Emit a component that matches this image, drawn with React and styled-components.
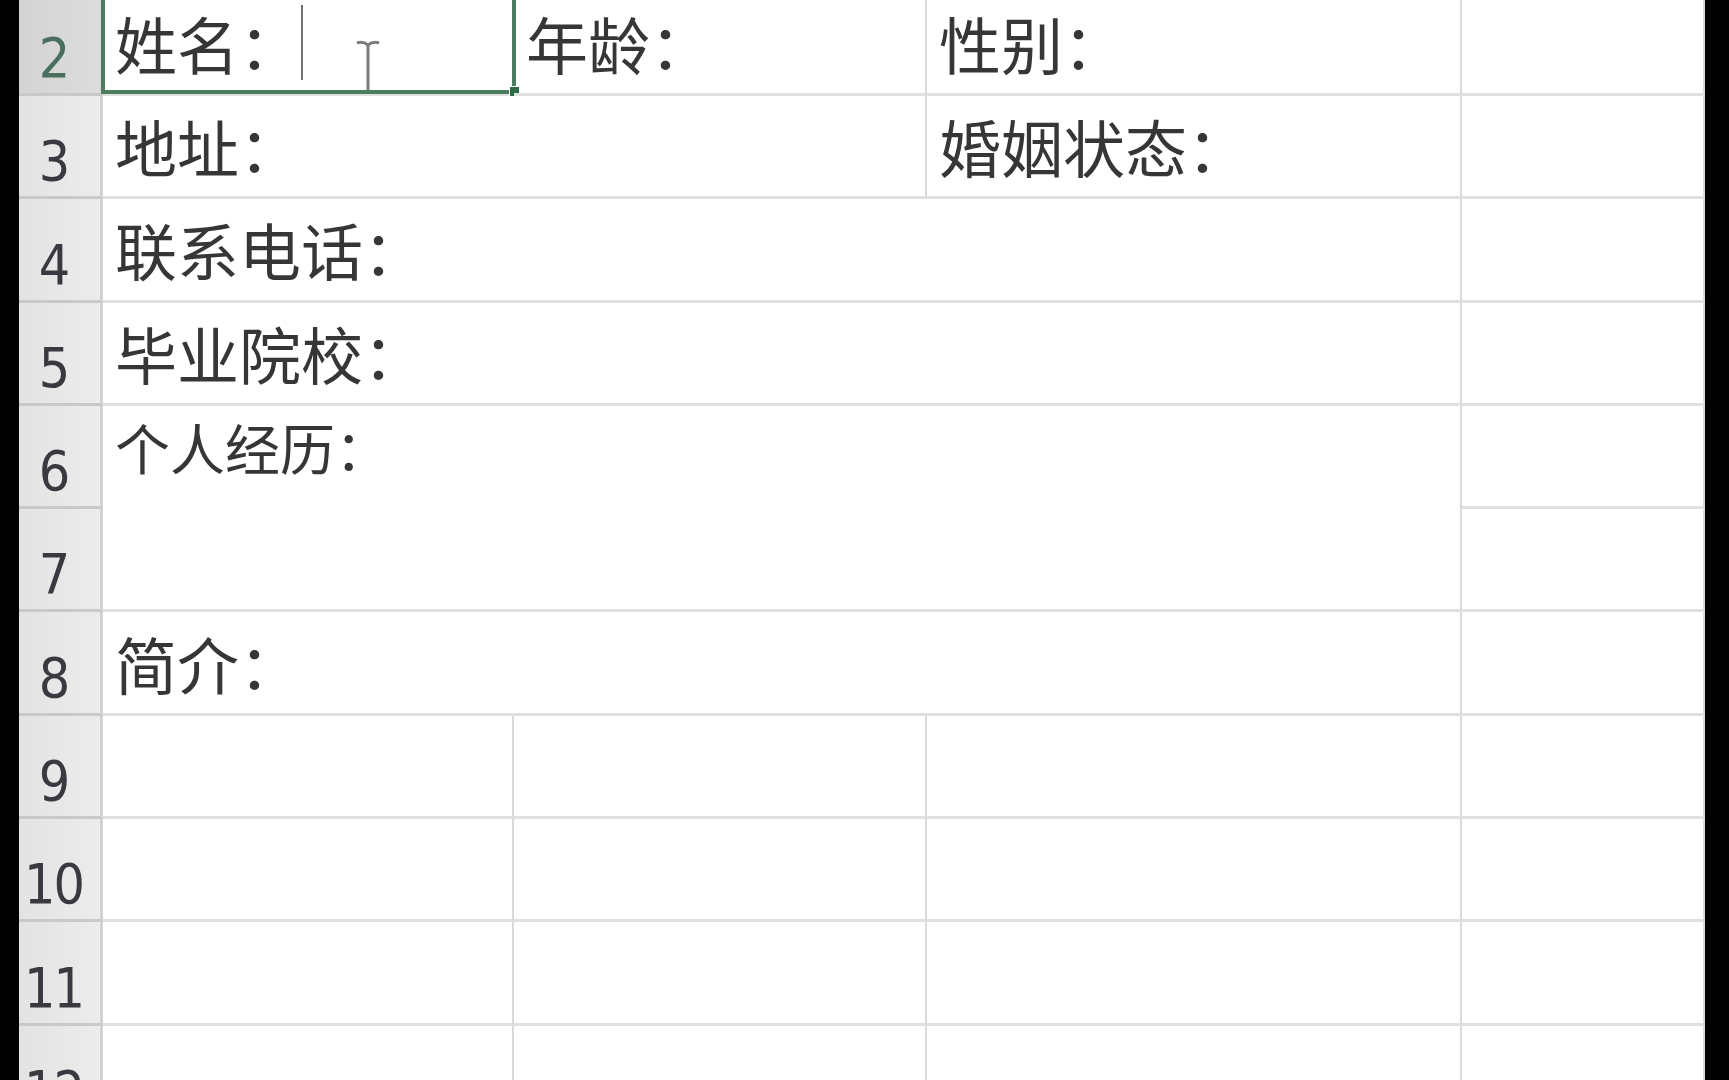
import React from "react";
import styled, { createGlobalStyle } from "styled-components";

const Global = createGlobalStyle`
  html, body { margin: 0; padding: 0; background: #000; overflow: hidden; }
  #root { width: 1729px; height: 1080px; }
`;

const Screen = styled.div`
  width: 1729px;
  height: 1080px;
  overflow: hidden;
  background: #000;
  display: flex;
  align-items: flex-start;
  padding: 0 24px 0 19px;
  box-sizing: border-box;
`;

const Sheet = styled.div`
  display: grid;
  grid-template-columns: 84px 411px 413px 535px 243px;
  grid-auto-rows: 103.3px;
  margin-top: -7.3px;
  background: #fff;
`;

const RowHead = styled.div`
  grid-column: 1;
  grid-row: ${(p) => p.$row};
  box-sizing: border-box;
  background: ${(p) =>
    p.$active
      ? "linear-gradient(to right, #d4d4d4, #dcdcdc)"
      : "linear-gradient(to right, #e3e3e3, #ececec)"};
  border-bottom: 3px solid #c9c9c9;
  border-right: 3px solid #d3d3d3;
  display: flex;
  align-items: flex-end;
  justify-content: center;
  padding: 0 12px 7px 0;
  font-family: "DejaVu Sans Condensed", "Liberation Sans", sans-serif;
  font-size: 55px;
  line-height: 1;
  letter-spacing: -2px;
  color: ${(p) => (p.$active ? "#4a6f5e" : "#383a40")};
`;

const Cell = styled.div`
  grid-column: ${(p) => p.$col} / span ${(p) => p.$cs || 1};
  grid-row: ${(p) => p.$row} / span ${(p) => p.$rs || 1};
  position: relative;
  box-sizing: border-box;
  border-right: 2px solid #dadada;
  border-bottom: 3px solid #e0e0e0;
  display: flex;
  align-items: ${(p) => (p.$top ? "flex-start" : "center")};
  padding: ${(p) => (p.$top ? "13px 0 0 12px" : "0 0 0 12px")};
  font-family: "Noto Sans CJK SC", "Noto Sans", sans-serif;
  font-size: ${(p) => (p.$small ? "55px" : "62px")};
  line-height: 1;
  color: #363636;
  white-space: nowrap;
`;

const Selection = styled.div`
  position: absolute;
  left: -2px;
  top: -4px;
  right: -4px;
  bottom: -1px;
  border: 4px solid #4b7d5e;
  pointer-events: none;
`;

const FillHandle = styled.div`
  position: absolute;
  right: -8px;
  bottom: -7px;
  width: 9px;
  height: 9px;
  background: #2e6b44;
  border: 1px solid #fff;
`;

const Caret = styled.div`
  position: absolute;
  left: 198px;
  top: 12px;
  width: 2px;
  height: 75px;
  background: #707070;
`;

const IBeam = styled.svg`
  position: absolute;
  left: 253px;
  top: 48px;
  width: 24px;
  height: 52px;
  overflow: visible;
`;

const rows = [2, 3, 4, 5, 6, 7, 8, 9, 10, 11, 12];

export default function App() {
  return (
    <>
      <Global />
      <Screen>
        <Sheet>
          {rows.map((n, i) => (
            <RowHead key={n} $row={i + 1} $active={n === 2}>
              {n}
            </RowHead>
          ))}

          {/* Row 2 */}
          <Cell $col={2} $row={1}>
            姓名：
            <Caret />
            <IBeam viewBox="0 0 24 52">
              <path
                d="M1 2 Q7 0 12 4 Q17 0 23 2 M12 4 V50"
                fill="none"
                stroke="#7c7c7c"
                strokeWidth="3"
              />
            </IBeam>
            <Selection>
              <FillHandle />
            </Selection>
          </Cell>
          <Cell $col={3} $row={1}>年龄：</Cell>
          <Cell $col={4} $row={1}>性别：</Cell>
          <Cell $col={5} $row={1} />

          {/* Row 3 */}
          <Cell $col={2} $cs={2} $row={2}>地址：</Cell>
          <Cell $col={4} $row={2}>婚姻状态：</Cell>
          <Cell $col={5} $row={2} />

          {/* Row 4 */}
          <Cell $col={2} $cs={3} $row={3}>联系电话：</Cell>
          <Cell $col={5} $row={3} />

          {/* Row 5 */}
          <Cell $col={2} $cs={3} $row={4}>毕业院校：</Cell>
          <Cell $col={5} $row={4} />

          {/* Rows 6-7 */}
          <Cell $col={2} $cs={3} $row={5} $rs={2} $top $small>
            个人经历：
          </Cell>
          <Cell $col={5} $row={5} />
          <Cell $col={5} $row={6} />

          {/* Row 8 */}
          <Cell $col={2} $cs={3} $row={7}>简介：</Cell>
          <Cell $col={5} $row={7} />

          {/* Rows 9-12 */}
          {[8, 9, 10, 11].map((r) =>
            [2, 3, 4, 5].map((c) => <Cell key={`${r}-${c}`} $col={c} $row={r} />)
          )}
        </Sheet>
      </Screen>
    </>
  );
}
